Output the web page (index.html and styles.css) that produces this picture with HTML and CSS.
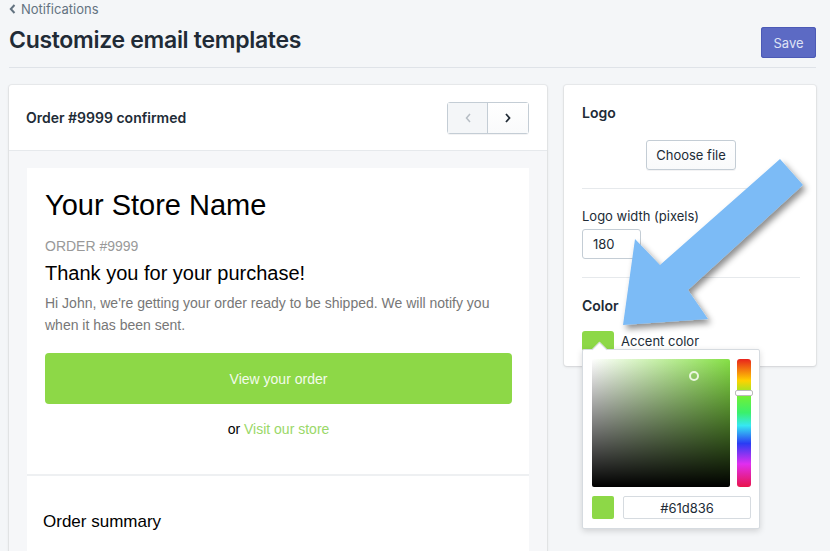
FILE: index.html
```html
<!DOCTYPE html>
<html lang="en">

<head>
    <meta charset="UTF-8">
    <meta name="viewport" content="width=device-width, initial-scale=1.0">
    <title>Customize email templates</title>
    <link rel="stylesheet" href="styles.css">
</head>

<body>
    <div class="page">
        <a class="breadcrumb" href="javascript:;">
            <svg width="7" height="10" viewBox="0 0 7 10"><path d="M5.5 1 L1.8 5 L5.5 9" fill="none" stroke="#637381" stroke-width="2"/></svg>
            Notifications
        </a>
        <div class="titlebar">
            <h1>Customize email templates</h1>
            <a class="btn-primary" href="javascript:;">Save</a>
        </div>

        <div class="layout">
            <div class="card preview">
                <div class="card-head">
                    <h2>Order #9999 confirmed</h2>
                    <div class="pager">
                        <a class="disabled" href="javascript:;">
                            <svg width="8" height="12" viewBox="0 0 8 12"><path d="M6 2 L2.5 6 L6 10" fill="none" stroke="#b6bdc4" stroke-width="1.5"/></svg>
                        </a>
                        <a href="javascript:;">
                            <svg width="8" height="12" viewBox="0 0 8 12"><path d="M2 2 L5.5 6 L2 10" fill="none" stroke="#212b36" stroke-width="1.8"/></svg>
                        </a>
                    </div>
                </div>
                <div class="preview-body">
                    <div class="email">
                        <div class="email-top">
                            <div class="store">Your Store Name</div>
                            <div class="order-no">ORDER #9999</div>
                            <div class="thanks">Thank you for your purchase!</div>
                            <p class="intro">Hi John, we're getting your order ready to be shipped. We will notify you when it has been sent.</p>
                            <a class="view-btn" href="javascript:;">View your order</a>
                            <div class="or">or <a href="javascript:;">Visit our store</a></div>
                        </div>
                        <div class="email-section">
                            <div class="summary">Order summary</div>
                        </div>
                    </div>
                </div>
            </div>

            <div class="card settings">
                <div class="section">
                    <h3>Logo</h3>
                    <div class="center">
                        <a class="btn" href="javascript:;">Choose file</a>
                    </div>
                </div>
                <div class="section">
                    <label>Logo width (pixels)</label>
                    <input class="field" type="text" value="180">
                </div>
                <div class="section">
                    <h3>Color</h3>
                    <div class="color-row">
                        <span class="swatch"></span>
                        <span>Accent color</span>
                        <div class="picker">
                            <div class="picker-top">
                                <div class="sat"><span class="dot"></span></div>
                                <div class="hue"><span class="thumb"></span></div>
                            </div>
                            <div class="picker-bottom">
                                <span class="mini"></span>
                                <input class="hex" type="text" value="#61d836">
                            </div>
                        </div>
                    </div>
                </div>
            </div>
        </div>
    </div>

    <svg class="arrow" width="830" height="551" viewBox="0 0 830 551">
        <defs>
            <filter id="shade" x="-20%" y="-20%" width="140%" height="140%">
                <feDropShadow dx="3" dy="4" stdDeviation="3" flood-color="#000" flood-opacity="0.45"/>
            </filter>
        </defs>
        <polygon points="623,325 635,239 660,265 780,159 803,185 688,290 708,319" fill="#7cbbf6" filter="url(#shade)"/>
    </svg>
</body>

</html>
```

FILE: styles.css
```css
* {
    padding: 0;
    margin: 0;
    box-sizing: border-box;
}

body {
    background: #f4f6f8;
    font-family: Inter, "Noto Sans", sans-serif;
    color: #212b36;
    width: 830px;
    height: 551px;
    overflow: hidden;
    position: relative;
}

a {
    text-decoration: none;
    color: inherit;
}

.page {
    padding-left: 9px;
    width: 816px;
}

.breadcrumb {
    display: flex;
    align-items: center;
    gap: 5px;
    height: 18px;
    font-size: 13px;
    color: #637381;
}

.titlebar {
    display: flex;
    justify-content: space-between;
    align-items: flex-end;
    padding-top: 6px;
    padding-bottom: 9px;
    border-bottom: 1px solid #dfe3e8;
}

h1 {
    font-size: 23px;
    line-height: 32px;
    font-weight: 600;
    margin-bottom: 2px;
    letter-spacing: -0.3px;
}

.btn-primary {
    width: 55px;
    height: 31px;
    border-radius: 3px;
    background: #5c6ac4;
    color: #dfe2f5;
    font-size: 13px;
    display: flex;
    justify-content: center;
    align-items: center;
    box-shadow: inset 0 0 0 1px #4c5ab6;
}

.layout {
    display: flex;
    gap: 17px;
    margin-top: 17px;
    align-items: flex-start;
}

.card {
    background: #fff;
    border-radius: 3px;
    box-shadow: 0 0 0 1px rgba(63, 63, 68, 0.05), 0 1px 3px 0 rgba(63, 63, 68, 0.15);
}

.preview {
    width: 538px;
}

.card-head {
    height: 66px;
    display: flex;
    justify-content: space-between;
    align-items: center;
    padding: 0 18px 0 17px;
    border-bottom: 1px solid #e6e9ec;
}

h2 {
    font-size: 14px;
    font-weight: 600;
}

.pager {
    display: flex;
    border: 1px solid #c4cdd5;
    border-radius: 3px;
    box-shadow: 0 1px 0 rgba(22, 29, 37, 0.05);
}

.pager a {
    width: 40px;
    height: 30px;
    display: flex;
    justify-content: center;
    align-items: center;
    background: linear-gradient(#fff, #f9fafb);
}

.pager a.disabled {
    background: #f4f6f8;
    border-right: 1px solid #c4cdd5;
}

.preview-body {
    background: #f6f7f9;
    padding: 17px 18px 0 18px;
    height: 420px;
}

.email {
    background: #fff;
    font-family: "Liberation Sans", Arial, sans-serif;
}

.email-top {
    padding: 19px 17px 37px 18px;
    border-bottom: 2px solid #eef0f2;
}

.store {
    font-size: 29px;
    line-height: 36px;
    color: #000;
}

.order-no {
    margin-top: 15px;
    font-size: 14px;
    color: #999;
}

.thanks {
    margin-top: 8px;
    font-size: 20px;
    color: #000;
}

.intro {
    margin-top: 7px;
    font-size: 14px;
    line-height: 22px;
    color: #777;
}

.view-btn {
    margin-top: 17px;
    height: 51px;
    display: flex;
    justify-content: center;
    align-items: center;
    border-radius: 4px;
    background: #8dd847;
    color: #f3fbec;
    font-size: 14px;
}

.or {
    margin-top: 17px;
    text-align: center;
    font-size: 14px;
    color: #000;
}

.or a {
    color: #9ad868;
}

.email-section {
    padding: 36px 18px 60px 16px;
}

.summary {
    font-size: 17px;
    color: #000;
}

.settings {
    width: 252px;
    padding: 0 16px 0 18px;
}

.section {
    padding: 18px 0;
    border-bottom: 1px solid #e6e9ec;
}

.section:last-child {
    border-bottom: none;
    padding-bottom: 16px;
}

h3 {
    font-size: 14px;
    line-height: 20px;
    font-weight: 600;
}

.center {
    display: flex;
    justify-content: center;
    margin-top: 17px;
}

.btn {
    width: 90px;
    height: 30px;
    border: 1px solid #c4cdd5;
    border-radius: 3px;
    background: linear-gradient(#fff, #f9fafb);
    box-shadow: 0 1px 0 rgba(22, 29, 37, 0.05);
    font-size: 13px;
    display: flex;
    justify-content: center;
    align-items: center;
}

label {
    display: block;
    font-size: 13px;
    line-height: 18px;
}

.field {
    display: block;
    margin-top: 4px;
    width: 59px;
    height: 30px;
    border: 1px solid #c4cdd5;
    border-radius: 3px;
    padding-left: 10px;
    font-family: inherit;
    font-size: 13px;
    color: #212b36;
}

.color-row {
    position: relative;
    margin-top: 16px;
    display: flex;
    align-items: center;
    gap: 7px;
    font-size: 13px;
    height: 18px;
}

.swatch {
    width: 32px;
    height: 20px;
    border-radius: 3px;
    background: #8dd847;
}

.picker {
    position: absolute;
    top: 17px;
    left: 0;
    width: 178px;
    padding: 9px 8px 9px 9px;
    background: #fff;
    border: 1px solid #d6dbe0;
    border-radius: 2px;
    box-shadow: 0 2px 6px rgba(0, 0, 0, 0.15);
}

.picker::before {
    content: "";
    position: absolute;
    top: -6px;
    left: 11px;
    width: 10px;
    height: 10px;
    background: #fff;
    border-left: 1px solid #d6dbe0;
    border-top: 1px solid #d6dbe0;
    transform: rotate(45deg);
}

.picker-top {
    display: flex;
    justify-content: space-between;
}

.sat {
    position: relative;
    width: 138px;
    height: 128px;
    border-radius: 2px;
    background: linear-gradient(to top, #000, rgba(0, 0, 0, 0)),
        linear-gradient(to right, #fff, #86e046);
}

.dot {
    position: absolute;
    left: 97px;
    top: 12px;
    width: 10px;
    height: 10px;
    border: 2px solid #eaf6e0;
    border-radius: 50%;
}

.hue {
    position: relative;
    width: 14px;
    height: 128px;
    border-radius: 3px;
    background: linear-gradient(#e8231c 0%, #ffd200 17%, #6cf03a 30%, #3af06c 42%, #36e8f2 52%, #2a3cf4 66%, #e02ef0 82%, #e8144c 100%);
}

.thumb {
    position: absolute;
    left: -2px;
    top: 31px;
    width: 18px;
    height: 6px;
    background: #fff;
    border: 1px solid #bbb;
    border-radius: 2px;
}

.picker-bottom {
    display: flex;
    gap: 9px;
    margin-top: 9px;
}

.mini {
    width: 24px;
    height: 23px;
    border-radius: 2px;
    background: #8dd847;
}

.hex {
    width: 128px;
    height: 23px;
    border: 1px solid #d6dbe0;
    border-radius: 2px;
    text-align: center;
    font-family: inherit;
    font-size: 13px;
    color: #212b36;
}

.arrow {
    position: absolute;
    top: 0;
    left: 0;
    pointer-events: none;
}
```
